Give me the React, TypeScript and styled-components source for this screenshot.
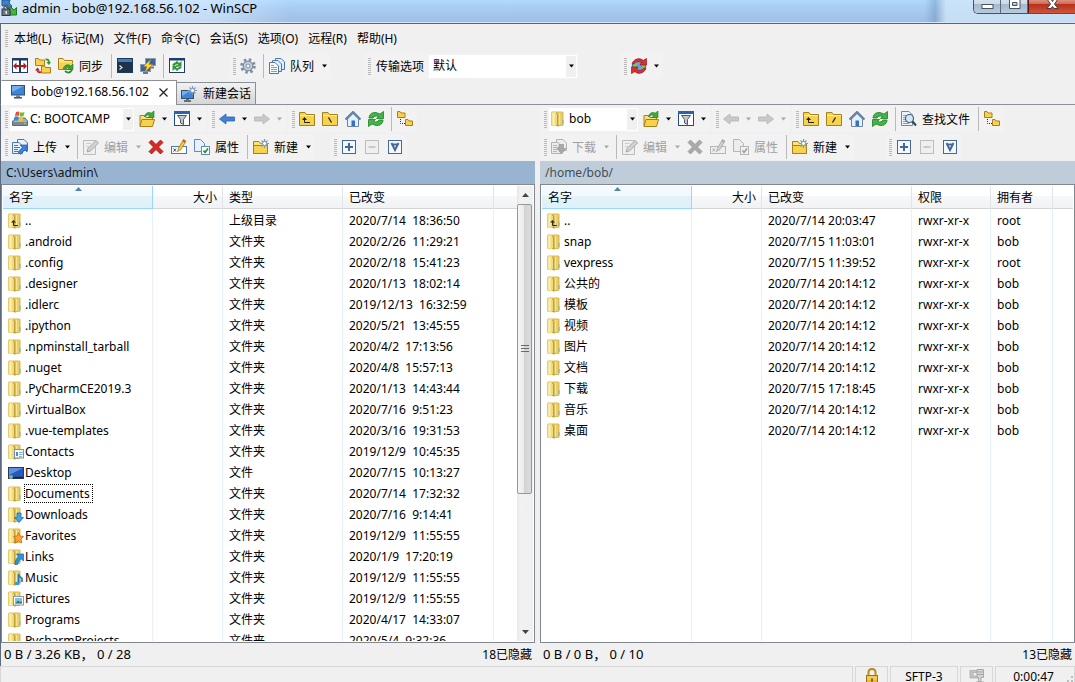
import React from "react";
import styled, { createGlobalStyle, css } from "styled-components";

const GlobalStyle = createGlobalStyle`
  *, *::before, *::after { box-sizing: border-box; }
  body {
    margin: 0;
    background: #f0f0f0;
    color: #000;
    font-family: "Noto Sans", "Noto Sans CJK SC", sans-serif;
    font-size: 12px;
    line-height: 16px;
  }
  button, select {
    margin: 0;
    padding: 0;
    border: 0;
    background: transparent;
    color: inherit;
    font: inherit;
  }
  svg { display: block; flex: none; }
`;

/* ---------- window ---------- */

const Window = styled.div`
  display: flex;
  flex-direction: column;
  height: 100vh;
  overflow: hidden;
  background: #f0f0f0;
  white-space: nowrap;
`;

const TitleBar = styled.header`
  display: flex;
  flex: none;
  justify-content: space-between;
  height: 24px;
  border-bottom: 1px solid #5a6573;
  box-shadow: inset 0 -1px #d9e8f6;
  background:
    linear-gradient(90deg, rgba(220, 236, 252, 0.75) 0, rgba(220, 236, 252, 0.6) 20%, transparent 27%),
    linear-gradient(90deg, transparent 86%, rgba(90, 130, 170, 0.35) 87%, rgba(208, 230, 248, 0.8) 88%, rgba(208, 230, 248, 0.8) 100%),
    linear-gradient(180deg, #b0dafd 0, #a9ccf1 8px, #9fbfe6 22px);
`;

const TitleText = styled.h1`
  display: flex;
  gap: 5px;
  margin: 0;
  padding-left: 1px;
  font-size: 13px;
  font-weight: 400;
  line-height: 17px;
`;

const WindowButtons = styled.div`
  display: flex;
  height: 14px;
  border: 1px solid #47515f;
  border-top: 0;
  border-right: 0;
  border-radius: 0 0 0 5px;
  overflow: hidden;
`;

const WindowButton = styled.button<{ $close?: boolean }>`
  display: flex;
  justify-content: center;
  width: ${(p) => (p.$close ? 47 : 27)}px;
  border-right: 1px solid #5d6a79;
  background: linear-gradient(180deg, #d5e0ec 0, #cbd9e8 4px, #a3b8cf 4px, #b9cbdd 13px);
  ${(p) =>
    p.$close &&
    css`
      border-right: 0;
      border-left: 1px solid #5b1410;
      background: linear-gradient(180deg, #dd8f80 0, #cf6a57 4px, #b5301a 4px, #d0553a 13px);
    `}
`;

/* ---------- toolbars ---------- */

const Bar = styled.div<{ $edge?: boolean }>`
  display: flex;
  flex: none;
  align-items: center;
  height: 28px;
  border-left: ${(p) => (p.$edge ? "1px solid #5f6b7c" : "0")};
`;

const Group = styled.div<{ $gap?: number; $plain?: boolean }>`
  display: flex;
  align-items: center;
  height: 26px;
  margin-left: ${(p) => p.$gap ?? 0}px;
  padding-left: 4px;
  border-radius: 2px;
  background: ${(p) => (p.$plain ? "transparent" : "#f2f2f2")};

  &::before {
    content: "";
    width: 3px;
    height: 17px;
    margin-right: 1px;
    background: repeating-linear-gradient(180deg, #b9b9b9 0 1px, transparent 1px 2px);
  }
`;

const Separator = styled.span<{ $wide?: boolean }>`
  width: 1px;
  height: 24px;
  margin: 0 2px 0 ${(p) => (p.$wide ? 4 : 3)}px;
  background: #b9b9b9;
`;

const ToolButton = styled.button`
  display: flex;
  align-items: center;
  height: 24px;
  padding: 0 4px 0 3px;

  &:disabled { color: #a0a0a0; }
`;

const ToolText = styled.span`
  margin-left: 5px;
  padding-top: 2px;
`;

const DropButton = styled(ToolButton)`
  padding-right: 3px;
`;

const ArrowBox = styled.span<{ $wide?: boolean }>`
  margin-left: ${(p) => (p.$wide ? 7 : 6)}px;
`;

const MenuButton = styled.button`
  height: 24px;
  padding: 2px 5px 0;
`;

const Combo = styled.div<{ $width: number }>`
  display: flex;
  align-items: center;
  width: ${(p) => p.$width}px;
  height: 23px;
  margin: 0 2px 0 1px;
  padding-left: 2px;
  border: 1px solid #fff;
  border-left: 0;
  background: #fff;
`;

const ComboSelect = styled.select`
  flex: 1;
  min-width: 0;
  height: 20px;
  margin-left: 2px;
  outline: 0;
  appearance: none;
`;

const ComboArrow = styled.span`
  display: flex;
  align-items: center;
  justify-content: center;
  width: 10px;
  height: 21px;
  background: #f0f0f0;
`;

const FieldLabel = styled.label`
  padding: 2px 4px 0;
`;

/* ---------- session tabs ---------- */

const TabStrip = styled.nav`
  display: flex;
  flex: none;
  align-items: flex-end;
  height: 25px;
  border-left: 1px solid #5f6b7c;
  border-bottom: 1px solid #8b8f98;
`;

const ActiveTab = styled.div`
  display: flex;
  align-items: center;
  min-width: 176px;
  height: 25px;
  margin-bottom: -1px;
  padding: 0 8px 2px 8px;
  border: 1px solid #8b8f98;
  border-bottom: 0;
  border-left-color: #fff;
  background: #fff;
`;

const TabLabel = styled.button`
  display: flex;
  flex: 1;
  align-items: center;
  gap: 5px;
`;

const NewTab = styled.button`
  display: flex;
  align-items: center;
  gap: 6px;
  height: 22px;
  padding: 0 4px;
  border: 1px solid #8b8f98;
  border-left: 0;
  border-bottom: 0;
  background: linear-gradient(180deg, #f2f2f2, #e3e3e3 50%, #d6d6d6);
`;

/* ---------- panes ---------- */

const Panes = styled.main`
  display: grid;
  flex: 1;
  grid-template-rows: minmax(0, 1fr);
  grid-template-columns: repeat(2, minmax(0, 1fr));
  column-gap: 5px;
  min-height: 0;
`;

const Pane = styled.section<{ $edge?: boolean }>`
  display: flex;
  flex-direction: column;
  min-width: 0;
  border-left: ${(p) => (p.$edge ? "1px solid #5f6b7c" : "0")};
`;

const PathBar = styled.div<{ $active?: boolean }>`
  flex: none;
  height: 23px;
  padding-left: 5px;
  background: ${(p) => (p.$active ? "#99b4d1" : "#bfcddb")};
  color: ${(p) => (p.$active ? "#10161d" : "#434e54")};
  line-height: 23px;
`;

const ListFrame = styled.div`
  display: flex;
  flex: 1;
  min-height: 0;
  padding: 1px;
  border: 1px solid #828790;
  background: #fff;
`;

const TableArea = styled.div`
  flex: 1;
  min-width: 0;
  overflow: hidden;
`;

const FileTable = styled.table`
  width: 100%;
  height: 100%;
  border-collapse: separate;
  border-spacing: 0;
  table-layout: fixed;
`;

const Col = styled.col<{ $width?: number }>`
  width: ${(p) => (p.$width ? `${p.$width}px` : "auto")};
`;

const HeadCell = styled.th<{ $sorted?: boolean; $right?: boolean }>`
  position: relative;
  height: 24px;
  padding: 0 5px 0 6px;
  border-right: 1px solid ${(p) => (p.$sorted ? "#96d9f9" : "#e0e3e8")};
  border-bottom: 1px solid transparent;
  background: ${(p) =>
    p.$sorted
      ? "linear-gradient(180deg, #f3fafd 0 10px, #e3f2f9 10px, #dff0f8 22px)"
      : "linear-gradient(180deg, #fff 0 10px, #f7f8fa 10px, #f1f2f4 22px)"};
  background-clip: padding-box;
  box-shadow: inset 0 -1px ${(p) => (p.$sorted ? "#96d9f9" : "#d5d5d5")};
  font-weight: 400;
  text-align: ${(p) => (p.$right ? "right" : "left")};

  &:last-child { border-right: 0; }
`;

const SortMark = styled.svg`
  position: absolute;
  top: 1px;
  left: calc(50% - 3px);
`;

const Cell = styled.td`
  height: 21px;
  padding: 0 0 0 6px;
  border-right: 1px solid #e6f0fb;
  overflow: hidden;
  white-space: pre;

  &:first-child { padding-left: 5px; }
  &:last-child { border-right: 0; }
`;

const FillerCell = styled(Cell)`
  height: auto;
`;

const FileName = styled.div`
  display: flex;
  align-items: center;
  gap: 1px;
`;

const NameText = styled.span<{ $focused?: boolean }>`
  padding-right: 2px;
  line-height: 17px;
  outline: ${(p) => (p.$focused ? "1px dotted #000" : "0")};
`;

const ScrollTrack = styled.div`
  display: flex;
  flex: none;
  flex-direction: column;
  width: 16px;
  background: linear-gradient(90deg, #e6e6e6, #f2f2f2 3px, #f0f0f0);
`;

const ScrollButton = styled.button`
  display: flex;
  flex: none;
  align-items: center;
  justify-content: center;
  height: 18px;
`;

const ScrollThumb = styled.div`
  display: flex;
  flex: 69 1 0;
  align-items: center;
  justify-content: center;
  margin-right: 1px;
  border: 1px solid #979797;
  border-radius: 2px;
  background: linear-gradient(90deg, #f6f6f6, #eaeaea 50%, #d2d3d5 50%, #dcdcdc);
`;

const ScrollRest = styled.div`
  flex: 31 1 0;
`;

const InfoRow = styled.div`
  display: flex;
  flex: none;
  justify-content: space-between;
  height: 23px;
  padding: 0 3px;
  line-height: 23px;
`;

const Totals = styled.span`
  font-size: 13px;
`;

/* ---------- status bar ---------- */

const StatusBar = styled.footer`
  display: flex;
  flex: none;
  gap: 2px;
  height: 16px;
  overflow: hidden;
`;

const StatusCell = styled.div<{ $width?: number }>`
  display: flex;
  flex: ${(p) => (p.$width ? `0 0 ${p.$width}px` : "1 1 0")};
  justify-content: center;
  height: 22px;
  padding-top: 1px;
  border: 1px solid #d7d7d7;
  line-height: 17px;
`;

const TimeCell = styled(StatusCell)`
  justify-content: flex-end;
  padding-right: 1px;
`;

const GripCorner = styled.svg`
  margin: 8px 0 0 13px;
`;

/* ---------- icons ---------- */

const FOLDER = "#f6d24e";
const FOLDER_EDGE = "#a8801a";

const Svg = ({ children, w = 16, h = 16 }: { children: React.ReactNode; w?: number; h?: number }) => (
  <svg width={w} height={h} viewBox={`0 0 ${w} ${h}`} fill="none" aria-hidden="true">
    {children}
  </svg>
);

const Caret = ({ off }: { off?: boolean }) => (
  <Svg w={7} h={4}>
    <path d="M1 0.5H6L3.5 3.5Z" fill={off ? "#a6a6a6" : "#000"} />
  </Svg>
);

const AppIcon = () => (
  <Svg>
    <path d="M1 0H9L8 3L11 6L7 9L3 5L1 6Z" fill="#3f83cf" stroke="#24588f" />
    <path d="M7 9L10 7L13 10L15.500 7.500V15H8L10 13Z" fill="#45b33c" stroke="#1e7a1c" />
    <path d="M3 10V7.500Q3 5 5 5T7 7.500V10" stroke="#555c66" strokeWidth="1.500" />
    <rect x="1" y="9" width="8" height="6.500" fill="#6c7480" stroke="#343a43" />
    <rect x="4.500" y="11" width="1.500" height="3" fill="#e8ecf0" />
  </Svg>
);

const CompareIcon = () => (
  <Svg>
    <rect x="0.500" y="0.500" width="15" height="14" fill="#fff" stroke="#1c3c6e" />
    <path d="M0 1.500H16" stroke="#1c3c6e" strokeWidth="2" />
    <path d="M8 1V15" stroke="#1c3c6e" strokeWidth="2" />
    <path d="M1 8L4.500 4.500V7H11.500V4.500L15 8L11.500 11.500V9H4.500V11.500Z" fill="#b01818" />
  </Svg>
);

const MiniFolder = ({ x, y }: { x: number; y: number }) => (
  <path d={`M${x} ${y}h3l1 1.500h5v5.500h-9Z`} fill={FOLDER} stroke={FOLDER_EDGE} />
);

const SyncBrowseIcon = () => (
  <Svg>
    <MiniFolder x={0.5} y={0.5} />
    <MiniFolder x={6.5} y={8} />
    <path d="M10.500 1.500Q14 1 14 4.500" stroke="#2f9a35" strokeWidth="1.800" />
    <path d="M11.500 4H16L13.800 7Z" fill="#2f9a35" />
    <path d="M6 14Q2.500 15 2.500 12" stroke="#cc2222" strokeWidth="1.800" />
    <path d="M0 12.500L2.500 9.500L5 12.500Z" fill="#cc2222" />
  </Svg>
);

const SyncIcon = () => (
  <Svg>
    <path d="M0.500 0.500H5L6.500 2.500H14.500V11.500H0.500Z" fill="#fbe68a" stroke={FOLDER_EDGE} />
    <path d="M1 4.500H14.500V11H1Z" fill={FOLDER} />
    <path d="M5 10.500Q8 4.500 13 8L15 6V11.500H9.500L11.500 9.500Q9 8.500 8 11Z" fill="#3aa63c" stroke="#1d7722" strokeWidth="0.600" />
    <path d="M7 13Q11 16.500 14 12" stroke="#2c8e30" strokeWidth="1.800" />
  </Svg>
);

const TerminalIcon = () => (
  <Svg>
    <rect x="0.500" y="0.500" width="15" height="14" fill="#203246" stroke="#1a3a66" />
    <path d="M1 1H15V4H1Z" fill="#4a7ab8" />
    <path d="M2.500 7.500L5 9.500L2.500 11.500" stroke="#dfe8f0" strokeWidth="1.200" />
  </Svg>
);

const PuttyIcon = () => (
  <Svg>
    <rect x="5.500" y="0.500" width="10" height="7" fill="#3564a8" stroke="#8e9cae" />
    <rect x="0.500" y="6.500" width="10" height="7" fill="#3564a8" stroke="#8e9cae" />
    <path d="M3 15H8M10 9.500H14" stroke="#6d7888" strokeWidth="1.800" />
    <path d="M10.500 1.500L3.500 8.500H7L5 14L12.500 6.500H9Z" fill="#ffd83a" stroke="#b98a10" strokeWidth="0.700" />
  </Svg>
);

const RefreshBoxIcon = () => (
  <Svg>
    <rect x="0.500" y="0.500" width="15" height="14" fill="#fff" stroke="#1c3c6e" />
    <path d="M0 1.500H16" stroke="#1c3c6e" strokeWidth="2" />
    <path d="M8 3V14" stroke="#1c3c6e" strokeDasharray="2 2" />
    <path d="M3 7Q6 2.500 10.500 4.800L12.500 3V8.500H7.500L9.300 6.500Q6.800 5.600 5.200 8Z" fill="#2f9a35" />
    <path d="M13 9Q10 13.500 5.500 11.300L3.500 13V7.800H8.500L6.700 9.700Q9.200 10.500 10.800 8.200Z" fill="#2f9a35" />
  </Svg>
);

const GearIcon = () => (
  <Svg>
    <circle cx="8" cy="8" r="6.300" stroke="#7e8fa1" strokeWidth="3" strokeDasharray="2.475 2.475" />
    <circle cx="8" cy="8" r="4.800" fill="#c3cfda" stroke="#7e8fa1" strokeWidth="1.200" />
    <circle cx="8" cy="8" r="2" fill="#f2f2f2" stroke="#7e8fa1" />
  </Svg>
);

const QueueIcon = () => (
  <Svg>
    <path d="M6.500 0.500H12L15.500 4V11.500H6.500Z" fill="#e3eefa" stroke="#4a77ad" />
    <path d="M3.500 2.500H9L12.500 6V13.500H3.500Z" fill="#e3eefa" stroke="#4a77ad" />
    <path d="M0.500 4.500H6L9.500 8V15.500H0.500Z" fill="#f6faff" stroke="#4a77ad" />
    <path d="M2 7.500H5M2 9.500H8M2 11.500H8M2 13.500H8" stroke="#7da2cf" />
  </Svg>
);

const GlobeIcon = () => (
  <Svg>
    <circle cx="8" cy="8" r="6.800" fill="#5fa5e8" stroke="#2e6cae" />
    <path d="M2 7Q4 3.500 6 5T5 9L3.500 11ZM11 7L14 6.500Q14.500 10 11.500 12Z" fill="#7bc55c" />
    <path d="M1 5.500Q4 -0.500 10 1L12 2.500L15.500 0.500V7H9L10.500 4.500Q6 2 3 6Z" fill="#dd2f2b" stroke="#a31714" strokeWidth="0.700" />
    <path d="M15 10.500Q12 16.500 6 15L4 13.500L0.500 15.500V9H7L5.500 11.500Q10 14 13 10Z" fill="#dd2f2b" stroke="#a31714" strokeWidth="0.700" />
  </Svg>
);

const MonitorIcon = () => (
  <Svg>
    <rect x="1.500" y="1.500" width="13" height="9.500" fill="#3a86dd" stroke="#3d4e63" />
    <path d="M2 2H14L2 8Z" fill="#72b0f0" />
    <path d="M6 11H10V13H6Z" fill="#7d8896" />
    <path d="M4 13.800H12" stroke="#3d4e63" strokeWidth="1.500" />
  </Svg>
);

const Spark = ({ x, y }: { x: number; y: number }) => (
  <g transform={`translate(${x} ${y})`}>
    <path d="M0 -4.500V4.500M-4.500 0H4.500M-3 -3L3 3M3 -3L-3 3" stroke="#7c99b8" strokeWidth="1.200" />
    <circle r="2" fill="#fff" stroke="#7c99b8" />
  </g>
);

const NewSessionIcon = () => (
  <Svg>
    <rect x="0.500" y="4.500" width="12" height="8" fill="#3a86dd" stroke="#3d4e63" />
    <path d="M1 5H9L1 10Z" fill="#72b0f0" />
    <path d="M5 13H8M3 15H10" stroke="#3d4e63" strokeWidth="1.500" />
    <Spark x={11.5} y={4.5} />
  </Svg>
);

const DriveIcon = () => (
  <Svg>
    <path d="M2 10L4 7H13L15.500 10V14.500H0.500V10Z" fill="#aab4bd" stroke="#606b76" />
    <path d="M1 11H15V14H1Z" fill="#7d8994" />
    <path d="M12 12.500H14" stroke="#5fe04f" strokeWidth="1.500" />
    <path d="M4 1Q6 0 7.500 1L6.800 5Q5 4 2.800 5Z" fill="#e9512c" />
    <path d="M8.200 1.300Q10 2 12.500 1L11.500 5.200Q9 6 7.500 5.200Z" fill="#74bb2f" />
    <path d="M2.500 5.700Q5 4.700 6.600 5.700L6 9.700Q4 8.700 1.500 9.700Z" fill="#3489dc" />
    <path d="M7.300 6Q9 6.700 11.300 5.900L10.300 9.900Q8 10.700 6.500 9.900Z" fill="#f9c423" />
  </Svg>
);

const OpenFolderIcon = () => (
  <Svg>
    <path d="M1 15V4.500H5.500L7 6.500H13.500V9" fill="#fbe07c" stroke={FOLDER_EDGE} />
    <path d="M1 15.500L3 8.500H15.500L13.500 15.500Z" fill={FOLDER} stroke={FOLDER_EDGE} />
    <path d="M5.500 5.500Q7 0 12.500 2L15 0V6.500H9L11 4.500Q8 3 6.500 5.800Z" fill="#41ab3e" stroke="#1d7722" strokeWidth="0.600" />
  </Svg>
);

const FilterIcon = () => (
  <Svg>
    <rect x="0.500" y="0.500" width="15" height="14" fill="#fff" stroke="#1f4e8c" />
    <path d="M0 1.500H16" stroke="#2b62ab" strokeWidth="3" />
    <path d="M3.500 4.500H12.500L9.500 8.500V13.500L6.500 12V8.500Z" fill="#c2c8cf" stroke="#4d5863" />
  </Svg>
);

const ArrowIcon = ({ right, off }: { right?: boolean; off?: boolean }) => (
  <Svg>
    <path
      d={right ? "M15.500 8L9 3V6H0.500V10H9V13Z" : "M0.500 8L7 3V6H15.500V10H7V13Z"}
      fill={off ? "#c9c9c9" : "#3f82d8"}
      stroke={off ? "#b4b4b4" : "#2a62ad"}
      strokeWidth="0.800"
    />
  </Svg>
);

const ParentIcon = () => (
  <Svg>
    <path d="M0.500 1.500H6L7.500 3.500H15.500V14.500H0.500Z" fill={FOLDER} stroke={FOLDER_EDGE} />
    <path d="M1 4.500H15" stroke="#fdf0b4" />
    <path d="M5.500 8V11.500H11" stroke="#222" />
    <path d="M3 9L5.500 6L8 9Z" fill="#222" />
  </Svg>
);

const RootIcon = ({ unix }: { unix?: boolean }) => (
  <Svg>
    <path d="M0.500 1.500H6L7.500 3.500H15.500V14.500H0.500Z" fill={FOLDER} stroke={FOLDER_EDGE} />
    <path d="M1 4.500H15" stroke="#fdf0b4" />
    <path d={unix ? "M9.500 6.500L6.500 11.500" : "M6.500 6.500L9.500 11.500"} stroke="#222" strokeWidth="1.300" />
  </Svg>
);

const HomeIcon = () => (
  <Svg>
    <path d="M2.500 8V15.500H13.500V8L8 2.500Z" fill="#e8f1fb" stroke="#6a84a3" />
    <path d="M0.500 8.500L8 1L15.500 8.500" stroke="#5d7fa8" strokeWidth="2" />
    <path d="M6.500 9.500H10V15H6.500Z" fill="#2f72c9" />
  </Svg>
);

const RefreshIcon = () => (
  <Svg>
    <path d="M1 6.500Q2 1 8 1.500L12 3L15.500 0.500V7.500H8.500L10.500 5.500Q6.500 4 5 7H1Z" fill="#45b545" stroke="#1c7f24" strokeWidth="0.800" />
    <path d="M15 9.500Q14 15 8 14.500L4 13L0.500 15.500V8.500H7.500L5.500 10.500Q9.500 12 11 9H15Z" fill="#45b545" stroke="#1c7f24" strokeWidth="0.800" />
  </Svg>
);

const TreeIcon = () => (
  <Svg>
    <path d="M0.500 0.500H3L4 2H8V6.500H0.500Z" fill={FOLDER} stroke={FOLDER_EDGE} />
    <path d="M8.500 8.500H11L12 10H15.500V14.500H8.500Z" fill={FOLDER} stroke={FOLDER_EDGE} />
    <path d="M3.500 8V12.500H8" stroke="#333" strokeDasharray="1 1" />
  </Svg>
);

const TransferIcon = ({ off }: { off?: boolean }) => {
  const edge = off ? "#b3b3b3" : "#4a77ad";
  const page = off ? "#ececec" : "#eaf3fd";
  return (
    <Svg>
      <path d="M5.500 0.500H12L15.500 4V11.500H5.500Z" fill={page} stroke={edge} />
      <path d="M0.500 3.500H7L10.500 7V14.500H0.500Z" fill={page} stroke={edge} />
      <path d="M2 6.500H6M2 8.500H8M2 10.500H6M2 12.500H6" stroke={edge} />
      <path
        d={off ? "M8 5.500H12.500V9.500H15L10.500 15L6 9.500H8Z" : "M8 6H15V13L12.800 10.800L8.500 15.500L6 13L10.300 8.400Z"}
        fill={off ? "#a8a8a8" : "#3f82d8"}
        stroke={off ? "#999" : "#235ba6"}
        strokeWidth="0.700"
      />
    </Svg>
  );
};

const EditIcon = () => (
  <Svg>
    <path d="M0.500 1.500H12.500V15.500H0.500Z" fill="#efefef" stroke="#bcbcbc" />
    <path d="M3 4.500H8M3 7.500H6" stroke="#cfcfcf" />
    <path d="M4 13L5 9.500L13 1.500L15.500 4L7.500 12Z" fill="#d2d2d2" stroke="#a8a8a8" />
  </Svg>
);

const DeleteIcon = ({ off }: { off?: boolean }) => (
  <Svg>
    <path
      d="M1 3.500L3.500 1L8 5.500L12.500 1L15 3.500L10.500 8L15 12.500L12.500 15L8 10.500L3.500 15L1 12.500L5.500 8Z"
      fill={off ? "#a9a9a9" : "#d62a24"}
      stroke={off ? "#979797" : "#9d1612"}
      strokeWidth="0.800"
    />
  </Svg>
);

const RenameIcon = ({ off }: { off?: boolean }) => (
  <Svg>
    <rect x="0.500" y="7.500" width="15" height="7" fill={off ? "#f0f0f0" : "#fff"} stroke={off ? "#b5b5b5" : "#4f79ad"} />
    <path d="M2.500 9.500L5 12.500M5 9.500L2.500 12.500" stroke={off ? "#aaa" : "#2c4a73"} />
    <path d="M6.500 12.500L7.500 9L12.500 0.500L15 2L10 10.500Z" fill={off ? "#cfcfcf" : "#f4c73c"} stroke={off ? "#a8a8a8" : "#a8801a"} strokeWidth="0.800" />
    <path d="M11.800 1.500L14.300 3" stroke={off ? "#a8a8a8" : "#cf4a36"} strokeWidth="1.500" />
  </Svg>
);

const PropsIcon = ({ off }: { off?: boolean }) => (
  <Svg>
    <path d="M0.500 0.500H6.500L10.500 4.500V12.500H0.500Z" fill={off ? "#ececec" : "#e6f1fc"} stroke={off ? "#b5b5b5" : "#5f8cc0"} />
    <rect x="7.500" y="7.500" width="8" height="8" fill={off ? "#f0f0f0" : "#fff"} stroke={off ? "#b5b5b5" : "#5f8cc0"} />
    <path d="M9.500 11.500L11 13.500L14 9.500" stroke={off ? "#9e9e9e" : "#1f8b2c"} strokeWidth="1.600" />
  </Svg>
);

const NewFolderIcon = () => (
  <Svg>
    <path d="M0.500 2.500H6L7.500 4.500H14.500V14.500H0.500Z" fill="#fbe07c" stroke={FOLDER_EDGE} />
    <path d="M0.500 6.500H14.500V14.500H0.500Z" fill={FOLDER} stroke={FOLDER_EDGE} />
    <Spark x={11.5} y={4.5} />
  </Svg>
);

const BoxIcon = ({ kind }: { kind: "plus" | "minus" | "filter" }) => {
  const color = kind === "minus" ? "#bdbdbd" : "#43699a";
  return (
    <Svg>
      <rect x="1.500" y="1.500" width="13" height="13" fill={kind === "minus" ? "#efefef" : "#f4f9ff"} stroke={color} />
      {kind === "plus" && <path d="M4 8H12M8 4V12" stroke={color} strokeWidth="2" />}
      {kind === "minus" && <path d="M4.500 8H11.500" stroke={color} strokeWidth="1.500" />}
      {kind === "filter" && <path d="M4.500 4L8 11L11.500 4M5 5.500H11" stroke={color} strokeWidth="2" />}
    </Svg>
  );
};

const FindIcon = () => (
  <Svg>
    <path d="M0.500 0.500H8L11.500 4V14.500H0.500Z" fill="#eaf3fd" stroke="#5f8cc0" />
    <path d="M2 4.500H5M2 6.500H4M2 8.500H4M2 10.500H5M2 12.500H8" stroke="#7da2cf" />
    <circle cx="8.500" cy="7.500" r="4" fill="#d6e8f8" stroke="#4a5b6e" strokeWidth="1.200" />
    <path d="M11.500 10.500L15 14.500" stroke="#3b4652" strokeWidth="2" />
  </Svg>
);

type FileKind =
  | "folder" | "up" | "contacts" | "desktop" | "downloads"
  | "favorites" | "links" | "music" | "pictures";

const FileIcon = ({ kind }: { kind: FileKind }) => {
  if (kind === "desktop") {
    return (
      <Svg>
        <rect x="0.500" y="2.500" width="15" height="11" fill="#2759b8" stroke="#2b3a55" />
        <path d="M1 3H15L1 10Z" fill="#5c93e0" />
        <path d="M4 12.500H15" stroke="#1d2638" strokeWidth="1.500" />
        <circle cx="3" cy="12" r="2" fill="#56b8ef" />
        <path d="M2 11.500L3.500 11" stroke="#f27b35" />
      </Svg>
    );
  }
  return (
    <Svg>
      <path d="M0 1.500L1 0.500H11.500L12.500 1.500V14L11.500 15H1L0 14Z" fill="#dcbc52" />
      <path d="M0.500 2L1.500 1H5V15H1.500L0.500 14Z" fill="#f1dd80" />
      <path d="M1.500 2H3.500V14H1.500Z" fill="#faf0b0" />
      <path d="M5 2L7.500 3.500V16L5 14.500Z" fill="#c3a03c" />
      <path d="M5.500 3V14" stroke="#f4e6a0" strokeWidth="0.800" />
      <path d="M7.500 1.500H11V14H7.500Z" fill="#ead06a" />
      <path d="M8.500 2V13.500" stroke="#f6e598" />
      <path d="M12 9V13" stroke="#6fb3c4" />
      {kind === "up" && (
        <>
          <path d="M5.500 8V12.500H10" stroke="#2a2a2a" />
          <path d="M3 9.500L5.500 7L8 9.500Z" fill="#2a2a2a" />
        </>
      )}
      {kind === "contacts" && (
        <>
          <rect x="6.500" y="5.500" width="9" height="8.500" fill="#f1f8ff" stroke="#7593b2" />
          <path d="M8 8H10V12H8Z" fill="#4b90cc" />
          <path d="M11 8.500H14.500M11 10.500H14.500M11 12.500H14" stroke="#6e9cc6" strokeWidth="0.800" />
        </>
      )}
      {kind === "downloads" && <path d="M9 6H13V10.500H15.500L11 15.500L6.500 10.500H9Z" fill="#3fa3e6" stroke="#1c6cae" strokeWidth="0.800" />}
      {kind === "favorites" && <path d="M10.500 4.500L12 8L15.500 8.500L13 11L13.800 15L10.500 13L7.200 15L8 11L5.500 8.500L9 8Z" fill="#f9a637" stroke="#d9601c" strokeWidth="0.800" />}
      {kind === "links" && <path d="M8.500 5H15.500V12L13 9.700Q10 11.500 9.500 15.500H7Q7 10.500 10.500 7.300Z" fill="#2f93dd" stroke="#1764a8" strokeWidth="0.700" />}
      {kind === "music" && (
        <>
          <path d="M10.500 13V4Q11 7 14 8.500V12" stroke="#1e7fc6" strokeWidth="1.700" />
          <ellipse cx="9" cy="13.500" rx="2.200" ry="1.700" fill="#2f9be0" />
        </>
      )}
      {kind === "pictures" && (
        <>
          <rect x="5.500" y="5.500" width="10" height="8.500" fill="#fff" stroke="#8b98a6" />
          <path d="M7 7H14V12.500H7Z" fill="#7fc0ec" />
          <path d="M7 12.500L10 9.500L12 11L14 10.500V12.500Z" fill="#3c7a68" />
        </>
      )}
    </Svg>
  );
};

const LockIcon = () => (
  <Svg w={14} h={18}>
    <path d="M3.500 8V4.500Q3.500 1 7 1T10.500 4.500V8" stroke="#b98a20" strokeWidth="2" />
    <rect x="1.500" y="7.500" width="11" height="9" fill="#f0b92c" stroke="#9a7014" />
    <path d="M2 9H12M2 11H12" stroke="#fbdc78" />
    <path d="M7 10.500V13.500" stroke="#222" strokeWidth="1.200" />
  </Svg>
);

const CompressIcon = () => (
  <Svg>
    <path d="M1 2.500H9V4.500H4V8H9V10H1Z" fill="#c3c3c3" stroke="#a9a9a9" strokeWidth="0.800" />
    <path d="M8 1.500H14.500V9.500H12V14H9.500V9.500H8Z" fill="#d4d4d4" stroke="#a9a9a9" />
    <path d="M8 4H14M8 6.500H14M7 14H15" stroke="#a9a9a9" />
  </Svg>
);

/* ---------- composed controls ---------- */

const Tool = ({ icon, name, text, off }: { icon: React.ReactNode; name: string; text?: boolean; off?: boolean }) => (
  <ToolButton type="button" aria-label={name} disabled={off}>
    {icon}
    {text && <ToolText>{name}</ToolText>}
  </ToolButton>
);

const Drop = ({ icon, name, text, off }: { icon: React.ReactNode; name: string; text?: boolean; off?: boolean }) => (
  <DropButton type="button" aria-label={name} aria-haspopup="menu" disabled={off}>
    {icon}
    {text && <ToolText>{name}</ToolText>}
    <ArrowBox $wide={text}>
      <Caret off={off} />
    </ArrowBox>
  </DropButton>
);

const LocationCombo = ({ icon, value, width, name }: { icon: React.ReactNode; value: string; width: number; name: string }) => (
  <Combo $width={width}>
    {icon}
    <ComboSelect aria-label={name} defaultValue={value}>
      <option>{value}</option>
    </ComboSelect>
    <ComboArrow>
      <Caret />
    </ComboArrow>
  </Combo>
);

const PaneToolbars = ({ remote }: { remote?: boolean }) => (
  <>
    <Bar>
      <Group>
        {remote ? (
          <LocationCombo name="远程目录" icon={<FileIcon kind="folder" />} value="bob" width={89} />
        ) : (
          <LocationCombo name="本地驱动器" icon={<DriveIcon />} value="C: BOOTCAMP" width={124} />
        )}
        <Drop name="打开目录" icon={<OpenFolderIcon />} />
        <Drop name="过滤" icon={<FilterIcon />} />
      </Group>
      <Group $gap={2}>
        <Drop name="后退" icon={<ArrowIcon off={remote} />} off={remote} />
        <Drop name="前进" icon={<ArrowIcon right off />} off />
      </Group>
      <Group $gap={2}>
        <Tool name="上级目录" icon={<ParentIcon />} />
        <Tool name="根目录" icon={<RootIcon unix={remote} />} />
        <Tool name="主目录" icon={<HomeIcon />} />
        <Tool name="刷新" icon={<RefreshIcon />} />
        <Separator />
        {remote && (
          <>
            <Tool name="查找文件" icon={<FindIcon />} text />
            <Separator $wide />
          </>
        )}
        <Tool name="目录树" icon={<TreeIcon />} />
      </Group>
    </Bar>
    <Bar>
      <Group>
        <Drop name={remote ? "下载" : "上传"} icon={<TransferIcon off={remote} />} text off={remote} />
        <Separator />
        <Drop name="编辑" icon={<EditIcon />} text off />
        <Tool name="删除" icon={<DeleteIcon off={remote} />} off={remote} />
        <Tool name="重命名" icon={<RenameIcon off={remote} />} off={remote} />
        <Tool name="属性" icon={<PropsIcon off={remote} />} text off={remote} />
        <Separator $wide />
        <Drop name="新建" icon={<NewFolderIcon />} text />
      </Group>
      <Group $gap={remote ? 31 : 15}>
        <Tool name="选择" icon={<BoxIcon kind="plus" />} />
        <Tool name="取消选择" icon={<BoxIcon kind="minus" />} off />
        <Tool name="选择文件" icon={<BoxIcon kind="filter" />} />
      </Group>
    </Bar>
  </>
);

/* ---------- data ---------- */

interface Column {
  title: string;
  width?: number;
  right?: boolean;
}

interface FileRow {
  name: string;
  kind?: FileKind;
  focused?: boolean;
  cells: string[];
}

const localColumns: Column[] = [
  { title: "名字", width: 150 },
  { title: "大小", width: 70, right: true },
  { title: "类型", width: 120 },
  { title: "已改变", width: 151 },
  { title: "" },
];

const local = (name: string, changed: string, kind: FileKind = "folder", type = "文件夹", focused = false): FileRow => ({
  name, kind, focused, cells: ["", type, changed, ""],
});

const localRows: FileRow[] = [
  local("..", "2020/7/14  18:36:50", "up", "上级目录"),
  local(".android", "2020/2/26  11:29:21"),
  local(".config", "2020/2/18  15:41:23"),
  local(".designer", "2020/1/13  18:02:14"),
  local(".idlerc", "2019/12/13  16:32:59"),
  local(".ipython", "2020/5/21  13:45:55"),
  local(".npminstall_tarball", "2020/4/2  17:13:56"),
  local(".nuget", "2020/4/8  15:57:13"),
  local(".PyCharmCE2019.3", "2020/1/13  14:43:44"),
  local(".VirtualBox", "2020/7/16  9:51:23"),
  local(".vue-templates", "2020/3/16  19:31:53"),
  local("Contacts", "2019/12/9  10:45:35", "contacts"),
  local("Desktop", "2020/7/15  10:13:27", "desktop", "文件"),
  local("Documents", "2020/7/14  17:32:32", "folder", "文件夹", true),
  local("Downloads", "2020/7/16  9:14:41", "downloads"),
  local("Favorites", "2019/12/9  11:55:55", "favorites"),
  local("Links", "2020/1/9  17:20:19", "links"),
  local("Music", "2019/12/9  11:55:55", "music"),
  local("Pictures", "2019/12/9  11:55:55", "pictures"),
  local("Programs", "2020/4/17  14:33:07"),
  local("PycharmProjects", "2020/5/4  9:32:36"),
];

const remoteColumns: Column[] = [
  { title: "名字", width: 150 },
  { title: "大小", width: 70, right: true },
  { title: "已改变", width: 150 },
  { title: "权限", width: 79 },
  { title: "拥有者", width: 62 },
  { title: "" },
];

const remote = (name: string, changed: string, owner = "bob", kind: FileKind = "folder"): FileRow => ({
  name, kind, cells: ["", changed, "rwxr-xr-x", owner, ""],
});

const remoteRows: FileRow[] = [
  remote("..", "2020/7/14 20:03:47", "root", "up"),
  remote("snap", "2020/7/15 11:03:01"),
  remote("vexpress", "2020/7/15 11:39:52", "root"),
  remote("公共的", "2020/7/14 20:14:12"),
  remote("模板", "2020/7/14 20:14:12"),
  remote("视频", "2020/7/14 20:14:12"),
  remote("图片", "2020/7/14 20:14:12"),
  remote("文档", "2020/7/14 20:14:12"),
  remote("下载", "2020/7/15 17:18:45"),
  remote("音乐", "2020/7/14 20:14:12"),
  remote("桌面", "2020/7/14 20:14:12"),
];

const FileList = ({ columns, rows }: { columns: Column[]; rows: FileRow[] }) => (
  <TableArea>
    <FileTable>
      <colgroup>
        {columns.map((c, i) => (
          <Col key={i} $width={c.width} />
        ))}
      </colgroup>
      <thead>
        <tr>
          {columns.map((c, i) => (
            <HeadCell key={i} scope="col" $sorted={i === 0} $right={c.right}>
              {c.title}
              {i === 0 && (
                <SortMark width="7" height="4" viewBox="0 0 7 4" aria-hidden="true">
                  <path d="M0 4L3.500 0L7 4Z" fill="#4f86a8" />
                </SortMark>
              )}
            </HeadCell>
          ))}
        </tr>
      </thead>
      <tbody>
        {rows.map((r) => (
          <tr key={r.name}>
            <Cell>
              <FileName>
                <FileIcon kind={r.kind ?? "folder"} />
                <NameText $focused={r.focused}>{r.name}</NameText>
              </FileName>
            </Cell>
            {r.cells.map((text, i) => (
              <Cell key={i}>{text}</Cell>
            ))}
          </tr>
        ))}
        <tr>
          {columns.map((_, i) => (
            <FillerCell key={i} />
          ))}
        </tr>
      </tbody>
    </FileTable>
  </TableArea>
);

const menus = ["本地(L)", "标记(M)", "文件(F)", "命令(C)", "会话(S)", "选项(O)", "远程(R)", "帮助(H)"];

export default function App() {
  return (
    <Window>
      <GlobalStyle />
      <TitleBar>
        <TitleText>
          <AppIcon />
          admin - bob@192.168.56.102 - WinSCP
        </TitleText>
        <WindowButtons>
          <WindowButton type="button" aria-label="最小化">
            <Svg w={13} h={13}>
              <rect x="1" y="4.500" width="11" height="4" fill="#fff" stroke="#4a5361" />
            </Svg>
          </WindowButton>
          <WindowButton type="button" aria-label="最大化">
            <Svg w={13} h={13}>
              <path d="M1.500 -1H12V8.500H1.500ZM4.500 2.500V5.500H9V2.500Z" fill="#fff" fillRule="evenodd" stroke="#4a5361" />
            </Svg>
          </WindowButton>
          <WindowButton type="button" aria-label="关闭" $close>
            <Svg w={13} h={13}>
              <path d="M1 8.500L4.500 4L1 -1H5L6.500 1.500L8 -1H12L8.500 4L12 8.500H8L6.500 6.500L5 8.500Z" fill="#fff" stroke="#4a3b45" />
            </Svg>
          </WindowButton>
        </WindowButtons>
      </TitleBar>

      <Bar $edge>
        <Group $plain>
          {menus.map((m) => (
            <MenuButton key={m} type="button">
              {m}
            </MenuButton>
          ))}
        </Group>
      </Bar>

      <Bar $edge>
        <Group>
          <Tool name="比较目录" icon={<CompareIcon />} />
          <Tool name="同步浏览" icon={<SyncBrowseIcon />} />
          <Tool name="同步" icon={<SyncIcon />} text />
          <Separator $wide />
          <Tool name="终端" icon={<TerminalIcon />} />
          <Tool name="PuTTY" icon={<PuttyIcon />} />
          <Separator />
          <Tool name="刷新目录" icon={<RefreshBoxIcon />} />
        </Group>
        <Group $gap={40}>
          <Tool name="系统设置" icon={<GearIcon />} />
          <Separator />
          <Drop name="队列" icon={<QueueIcon />} text />
        </Group>
        <Group $gap={33}>
          <FieldLabel htmlFor="transfer">传输选项</FieldLabel>
          <Combo $width={148}>
            <ComboSelect id="transfer" defaultValue="默认">
              <option>默认</option>
            </ComboSelect>
            <ComboArrow>
              <Caret />
            </ComboArrow>
          </Combo>
        </Group>
        <Group $gap={41}>
          <Drop name="更新" icon={<GlobeIcon />} />
        </Group>
      </Bar>

      <TabStrip>
        <ActiveTab>
          <TabLabel type="button">
            <MonitorIcon />
            bob@192.168.56.102
          </TabLabel>
          <button type="button" aria-label="关闭会话">
            <Svg w={9} h={9}>
              <path d="M0.500 0.500L8.500 8.500M8.500 0.500L0.500 8.500" stroke="#222" strokeWidth="1.200" />
            </Svg>
          </button>
        </ActiveTab>
        <NewTab type="button">
          <NewSessionIcon />
          新建会话
        </NewTab>
      </TabStrip>

      <Panes>
        <Pane $edge>
          <PaneToolbars />
          <PathBar $active>C:\Users\admin\</PathBar>
          <ListFrame>
            <FileList columns={localColumns} rows={localRows} />
            <ScrollTrack>
              <ScrollButton type="button" aria-label="向上滚动">
                <Svg w={7} h={4}>
                  <path d="M0 4L3.500 0L7 4Z" fill="#444" />
                </Svg>
              </ScrollButton>
              <ScrollThumb>
                <Svg w={8} h={8}>
                  <path d="M0 0.500H8M0 3.500H8M0 6.500H8" stroke="#6a6a6a" />
                </Svg>
              </ScrollThumb>
              <ScrollRest />
              <ScrollButton type="button" aria-label="向下滚动">
                <Svg w={7} h={4}>
                  <path d="M0 0L3.500 4L7 0Z" fill="#444" />
                </Svg>
              </ScrollButton>
            </ScrollTrack>
          </ListFrame>
          <InfoRow>
            <Totals>0 B / 3.26 KB， 0 / 28</Totals>
            <span>18已隐藏</span>
          </InfoRow>
        </Pane>
        <Pane>
          <PaneToolbars remote />
          <PathBar>/home/bob/</PathBar>
          <ListFrame>
            <FileList columns={remoteColumns} rows={remoteRows} />
          </ListFrame>
          <InfoRow>
            <Totals>0 B / 0 B， 0 / 10</Totals>
            <span>13已隐藏</span>
          </InfoRow>
        </Pane>
      </Panes>

      <StatusBar>
        <StatusCell />
        <StatusCell $width={33}>
          <LockIcon />
        </StatusCell>
        <StatusCell $width={68}>SFTP-3</StatusCell>
        <StatusCell $width={33}>
          <CompressIcon />
        </StatusCell>
        <TimeCell $width={80}>
          0:00:47
          <GripCorner width="6" height="6" viewBox="0 0 6 6" aria-hidden="true">
            <path d="M4 0h2v2h-2zM4 4h2v2h-2zM0 4h2v2h-2z" fill="#bdbdbd" />
          </GripCorner>
        </TimeCell>
      </StatusBar>
    </Window>
  );
}
